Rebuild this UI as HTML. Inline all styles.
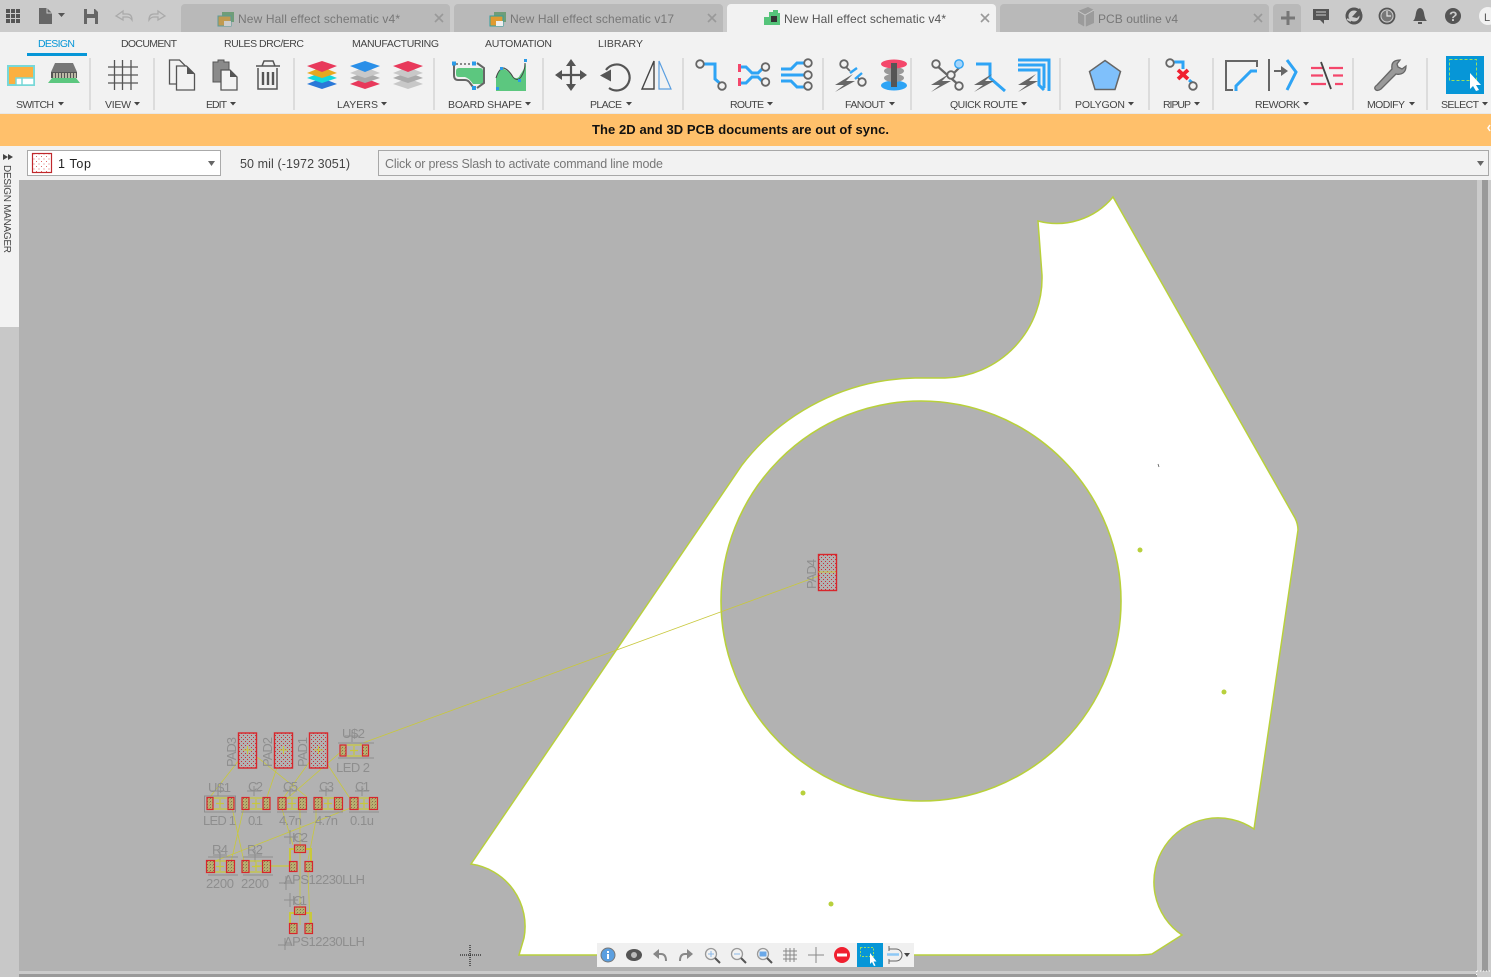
<!DOCTYPE html>
<html><head><meta charset="utf-8"><title>PCB</title>
<style>
html,body{margin:0;padding:0;background:#f2f2f2;overflow:hidden}
svg{display:block;font-family:"Liberation Sans",sans-serif}
.r{font-size:10.5px;fill:#444}
.g{font-size:10.5px;fill:#444}
.t{font-size:12px;fill:#777}
.l{font-size:13px;fill:#8e8e8e;font-weight:400}
.c{fill:none;stroke:#2ea4f5;stroke-width:3}
.o{fill:#f2f2f2;stroke:#666;stroke-width:1.8}
.d{fill:none;stroke:#666;stroke-width:2}
.x{stroke:#999;stroke-width:1.6;fill:none}
.rn{stroke:#c8c83c;stroke-width:.8;fill:none}
.s{stroke:#c8c83c;stroke-width:1.2;fill:none}
</style></head><body>
<svg xmlns="http://www.w3.org/2000/svg" width="1491" height="977" viewBox="0 0 1491 977">
<defs>
<pattern id="pd" width="4" height="4" patternUnits="userSpaceOnUse"><rect width="4" height="4" fill="#b2b2b2"/><rect x="1" y="1" width="1" height="1" fill="#c8303a"/><rect x="3" y="3" width="1" height="1" fill="#c8303a"/></pattern>
<pattern id="ps" width="3" height="3" patternUnits="userSpaceOnUse"><rect width="3" height="3" fill="#b8b070"/><rect x="0" y="0" width="1" height="1" fill="#8a6a50"/><rect x="2" y="1" width="1" height="1" fill="#a09a60"/></pattern>
<pattern id="pw" width="5" height="5" patternUnits="userSpaceOnUse"><rect width="5" height="5" fill="#fff"/><rect x="1" y="1" width="1" height="1" fill="#e06a6a"/><rect x="3.500" y="3.500" width="1" height="1" fill="#e06a6a"/></pattern>
</defs>

<!-- base -->
<rect width="1491" height="977" fill="#f2f2f2"/>
<rect y="0" width="1491" height="32" fill="#cbcbcb"/>

<!-- tabs -->
<path d="M181 32V8a4 4 0 0 1 4-4H446a4 4 0 0 1 4 4V32Z" fill="#b9b9b9"/>
<path d="M454 32V8a4 4 0 0 1 4-4H719a4 4 0 0 1 4 4V32Z" fill="#b9b9b9"/>
<path d="M727 32V8a4 4 0 0 1 4-4H992a4 4 0 0 1 4 4V32Z" fill="#f2f2f2"/>
<path d="M1000 32V8a4 4 0 0 1 4-4H1265a4 4 0 0 1 4 4V32Z" fill="#b9b9b9"/>
<path d="M1273 32V8a4 4 0 0 1 4-4H1297a4 4 0 0 1 4 4V32Z" fill="#b9b9b9"/>
<path d="M1281 18H1295M1288 11V25" stroke="#777" stroke-width="3"/>

<text x="238" y="23" class="t" textLength="162">New Hall effect schematic v4*</text>
<text x="510" y="23" class="t" textLength="164">New Hall effect schematic v17</text>
<text x="784" y="23" class="t" style="fill:#555" textLength="162">New Hall effect schematic v4*</text>
<text x="1098" y="23" class="t" textLength="80">PCB outline v4</text>
<path class="x" d="M435 14l8 8m0-8l-8 8M708 14l8 8m0-8l-8 8M981 14l8 8m0-8l-8 8M1254 14l8 8m0-8l-8 8"/>
<!-- tab icons -->
<g><rect x="222" y="12" width="12" height="10" fill="#6f9d78"/><rect x="218" y="16" width="13" height="10" fill="#c09a50" stroke="#5a9a9a"/><rect x="224" y="21" width="7" height="5" fill="#ccc"/></g>
<g><rect x="494" y="12" width="12" height="10" fill="#6f9d78"/><rect x="490" y="16" width="13" height="10" fill="#e09a30" stroke="#30a0a0"/><rect x="496" y="21" width="7" height="5" fill="#eee"/></g>
<g><path d="M764 17h5v-5h4v-2h5v3h2v12h-16z" fill="#55c47a"/><rect x="771" y="16" width="6" height="6" fill="#333"/></g>
<g><path d="M1078 11l10-4 6 3v13l-9 4-7-4z" fill="#9b9b9b"/><path d="M1078 11l7 4 9-5M1085 15v12" stroke="#c8c8c8" fill="none"/></g>

<!-- top-left icons -->
<g fill="#555"><rect x="6" y="9" width="4" height="4"/><rect x="11" y="9" width="4" height="4"/><rect x="16" y="9" width="4" height="4"/><rect x="6" y="14" width="4" height="4"/><rect x="11" y="14" width="4" height="4"/><rect x="16" y="14" width="4" height="4"/><rect x="6" y="19" width="4" height="4"/><rect x="11" y="19" width="4" height="4"/><rect x="16" y="19" width="4" height="4"/></g>
<path d="M39 8h8l5 5v11H39z" fill="#666"/><path d="M47 8v5h5" stroke="#ccc" fill="none"/><path d="M58 13h7l-3.500 4z" fill="#555"/>
<path d="M84 9h11l3 3v12H84z" fill="#666"/><rect x="87" y="9" width="7" height="5" fill="#ccc"/><rect x="87" y="18" width="8" height="6" fill="#ccc"/>
<path d="M116 16l7-5v3h4q5 0 5 6q-2-3-5-3h-4v3z" fill="#cbcbcb" stroke="#aaa" stroke-width="1.300"/>
<path d="M165 16l-7-5v3h-4q-5 0-5 6q2-3 5-3h4v3z" fill="#cbcbcb" stroke="#aaa" stroke-width="1.300"/>

<!-- top-right icons -->
<path d="M1313 9h16v11h-5v4l-4-4h-7z" fill="#555"/><path d="M1316 12h10M1316 15h10" stroke="#cbcbcb"/>
<circle cx="1354" cy="16" r="7" fill="none" stroke="#555" stroke-width="3"/><path d="M1352 17l8-9 2 5-5 5z" fill="#555"/><path d="M1347 19l4 2" stroke="#cbcbcb" stroke-width="2"/>
<circle cx="1387" cy="16" r="7.500" fill="none" stroke="#555" stroke-width="1.800"/><circle cx="1387" cy="16" r="5.500" fill="#777"/><path d="M1387 11v5h4" stroke="#e5e5e5" fill="none" stroke-width="1.200"/>
<path d="M1413 21q2-1 3-8q1-5 4-5t4 5q1 7 3 8zM1418 22h4v2h-4z" fill="#555"/>
<circle cx="1453" cy="16" r="8" fill="#555"/><text x="1449" y="21" font-size="14" font-weight="700" fill="#cbcbcb">?</text>
<circle cx="1488" cy="16" r="9" fill="#f2f2f2"/><text x="1484" y="21" font-size="11" fill="#555">L</text>

<!-- ribbon tabs -->
<text x="38" y="47" class="r" style="fill:#0696d7" textLength="37">DESIGN</text>
<text x="121" y="47" class="r" textLength="56">DOCUMENT</text>
<text x="224" y="47" class="r" textLength="80">RULES DRC/ERC</text>
<text x="352" y="47" class="r" textLength="87">MANUFACTURING</text>
<text x="485" y="47" class="r" textLength="67">AUTOMATION</text>
<text x="598" y="47" class="r" textLength="45">LIBRARY</text>
<rect x="27" y="53" width="60" height="3" fill="#0696d7"/>

<!-- separators -->
<g fill="#dcdcdc"><rect x="89" y="58" width="2" height="52"/><rect x="153" y="58" width="2" height="52"/><rect x="293" y="58" width="2" height="52"/><rect x="433" y="58" width="2" height="52"/><rect x="542" y="58" width="2" height="52"/><rect x="682" y="58" width="2" height="52"/><rect x="822" y="58" width="2" height="52"/><rect x="910" y="58" width="2" height="52"/><rect x="1059" y="58" width="2" height="52"/><rect x="1148" y="58" width="2" height="52"/><rect x="1212" y="58" width="2" height="52"/><rect x="1352" y="58" width="2" height="52"/><rect x="1426" y="58" width="2" height="52"/></g>

<!-- group labels -->
<text x="16" y="108" class="g" textLength="38">SWITCH</text><path d="M58 102h6l-3 3.500z" fill="#444"/>
<text x="105" y="108" class="g" textLength="26">VIEW</text><path d="M134 102h6l-3 3.500z" fill="#444"/>
<text x="206" y="108" class="g" textLength="21">EDIT</text><path d="M230 102h6l-3 3.500z" fill="#444"/>
<text x="337" y="108" class="g" textLength="41">LAYERS</text><path d="M381 102h6l-3 3.500z" fill="#444"/>
<text x="448" y="108" class="g" textLength="74">BOARD SHAPE</text><path d="M525 102h6l-3 3.500z" fill="#444"/>
<text x="590" y="108" class="g" textLength="32">PLACE</text><path d="M626 102h6l-3 3.500z" fill="#444"/>
<text x="730" y="108" class="g" textLength="34">ROUTE</text><path d="M767 102h6l-3 3.500z" fill="#444"/>
<text x="845" y="108" class="g" textLength="40">FANOUT</text><path d="M889 102h6l-3 3.500z" fill="#444"/>
<text x="950" y="108" class="g" textLength="68">QUICK ROUTE</text><path d="M1021 102h6l-3 3.500z" fill="#444"/>
<text x="1075" y="108" class="g" textLength="50">POLYGON</text><path d="M1128 102h6l-3 3.500z" fill="#444"/>
<text x="1163" y="108" class="g" textLength="28">RIPUP</text><path d="M1194 102h6l-3 3.500z" fill="#444"/>
<text x="1255" y="108" class="g" textLength="45">REWORK</text><path d="M1303 102h6l-3 3.500z" fill="#444"/>
<text x="1367" y="108" class="g" textLength="38">MODIFY</text><path d="M1409 102h6l-3 3.500z" fill="#444"/>
<text x="1441" y="108" class="g" textLength="38">SELECT</text><path d="M1482 102h6l-3 3.500z" fill="#444"/>

<!-- switch -->
<rect x="8" y="66" width="26" height="19" fill="#fbb040" stroke="#78d8d8" stroke-width="2"/>
<rect x="16" y="78" width="18" height="7" fill="#fff" stroke="#78d8d8" stroke-width="1.500"/><path d="M22 78v7" stroke="#78d8d8" stroke-width="1.500"/>
<path d="M52 78h24l4 5H48z" fill="#5cc77f"/><path d="M55 63h18l4 9H51z" fill="#777"/><rect x="51" y="72" width="26" height="6" fill="#555"/>
<path d="M54 73v5M57 73v5M60 73v5M63 73v5M66 73v5M69 73v5M72 73v5M75 73v5" stroke="#e8e4c8" stroke-width="1.400"/>

<!-- grid -->
<path d="M108 67h30M108 75h30M108 83h30M114.500 60v30M122.500 60v30M131 60v30" stroke="#555" stroke-width="1.300" fill="none"/>

<!-- edit -->
<path d="M169.500 60h10l6 6v18h-16z" fill="#f2f2f2" stroke="#555" stroke-width="1.300"/>
<path d="M176.500 66h10l8 8v16h-18z" fill="#f2f2f2" stroke="#555" stroke-width="1.300"/><path d="M187 66l8 8h-8z" fill="#555"/>
<path d="M213 62h5v-2h6v2h5v20h-16z" fill="#8a8a8a" stroke="#555"/>
<path d="M221 70h9l7 7v13h-16z" fill="#f2f2f2" stroke="#555" stroke-width="1.300"/><path d="M230 70l7 7h-7z" fill="#555"/>
<path d="M258 68v21h19V68M256 66h24M262 66l2-5h9l2 5" fill="none" stroke="#555" stroke-width="1.500"/><path d="M263 72v13M268 72v13M273 72v13" stroke="#555" stroke-width="2.400"/>

<!-- layers -->
<g><path d="M322 78l15 6-15 5-15-5z" fill="#2a78d8"/><path d="M322 72l15 6-15 5-15-5z" fill="#15d8dc"/><path d="M322 67l15 6-15 5-15-5z" fill="#e8a820"/><path d="M322 61l15 5-15 6-15-6z" fill="#e8395b"/></g>
<g><path d="M365 78l15 6-15 5-15-5z" fill="#e8395b"/><path d="M365 72l15 6-15 5-15-5z" fill="#aaa"/><path d="M365 67l15 6-15 5-15-5z" fill="#c8c8c8"/><path d="M365 61l15 5-15 6-15-6z" fill="#2a8fe8"/></g>
<g><path d="M408 78l15 6-15 5-15-5z" fill="#c8c8c8"/><path d="M408 72l15 6-15 5-15-5z" fill="#aaa"/><path d="M408 67l15 6-15 5-15-5z" fill="#c8c8c8"/><path d="M408 61l15 5-15 6-15-6z" fill="#e8395b"/></g>

<!-- board shape -->
<path d="M459 68h21q3 0 3 3v11q0 2-3 2h-7q-4-6-8-7h-6q-3 0-3-3v-3q0-3 3-3z" fill="#5cc77f"/>
<path d="M456 64h17" fill="none" stroke="#666" stroke-width="1.500" stroke-dasharray="2 2"/>
<path d="M454 65v10q0 5 4 5h7q3 0 5 3l3 4M477 63l7 5v15l-7 5" fill="none" stroke="#666" stroke-width="2"/>
<g fill="#2a9be8"><rect x="452" y="61.500" width="4" height="4"/><rect x="472" y="61.500" width="4" height="4"/><rect x="472" y="86" width="4" height="4"/></g>
<path d="M496 91V77q3-9 8-8 5 2 9 8 5 3 7-2 5-7 6-12v28z" fill="#5cc77f"/><path d="M496 78q3-10 8-10 5 2 9 9 4 5 8 0 4-6 4-14" fill="none" stroke="#444"/>
<g fill="#2a9be8"><rect x="500" y="67" width="3" height="3"/><rect x="518" y="79" width="3" height="3"/><rect x="524" y="59" width="3" height="3"/><rect x="496" y="87" width="3" height="3"/></g>

<!-- place -->
<path d="M571 61v28M557 75h28" stroke="#555" stroke-width="2.200"/><path d="M571 59l-5 7h10zM571 91l-5-7h10zM555 75l7-5v10zM587 75l-7-5v10z" fill="#555"/>
<path d="M606 70a13 13 0 1 1 3 18" fill="none" stroke="#555" stroke-width="2.200"/><path d="M600 75.500l11-6v12z" fill="#555"/>
<path d="M654 61v28h-12z" fill="none" stroke="#444" stroke-width="1.400"/><path d="M659 61v28h12z" fill="none" stroke="#5b9fe0" stroke-width="1.200"/>

<!-- route -->
<path class="c" d="M704 64h11v15l9 8"/><circle class="o" cx="700" cy="64" r="3.800"/><circle class="o" cx="722" cy="86" r="3.800"/>
<path class="c" d="M741 67h5l6 6h6l6-6M741 83h5l6-6h6l6 6" /><rect x="738" y="64" width="3" height="8" fill="#f4476b"/><rect x="738" y="78" width="3" height="8" fill="#f4476b"/><circle class="o" cx="765.500" cy="67" r="3.800"/><circle class="o" cx="765.500" cy="82" r="3.800"/>
<path class="c" d="M781 69h10l6-6h7M781 75h23M781 81h10l6 6h7"/><circle class="o" cx="808" cy="63" r="3.800"/><circle class="o" cx="808" cy="75" r="3.800"/><circle class="o" cx="808" cy="86" r="3.800"/>

<!-- fanout -->
<path d="M846 67l4 4M858 78l3 3" stroke="#666" stroke-width="1.800"/><path class="c" style="stroke-width:2.400" d="M850 73l7-5M855 79l7-6"/><circle class="o" cx="844" cy="64" r="3.800"/><circle class="o" cx="862" cy="82" r="3.800"/><path d="M853 74L835 85H844L835 92 855 81H846Z" fill="#666"/>
<ellipse cx="894" cy="85.500" rx="13" ry="5" fill="#2ea4f5"/><ellipse cx="894" cy="78" rx="10" ry="4" fill="#999"/><ellipse cx="894" cy="71" rx="10" ry="4" fill="#999"/><ellipse cx="894" cy="64" rx="13" ry="4.500" fill="#f4476b"/><rect x="891" y="63" width="6" height="24" fill="#555"/>

<!-- quick route -->
<path d="M936 65l25 22M962 65l-11 11" stroke="#666" stroke-width="2.200"/><circle class="o" cx="936" cy="64" r="3.800"/><circle cx="959" cy="64" r="4.200" fill="#a5d5fa" stroke="#2ea4f5" stroke-width="1.400"/><circle class="o" cx="951" cy="75" r="3.800"/><circle class="o" cx="959" cy="86" r="3.800"/><path d="M949 74L931 85H940L931 92 951 81H942Z" fill="#666"/>
<path class="c" d="M976 64h14v14l15 13"/><path d="M992 74L974 85H983L974 92 994 81H985Z" fill="#666"/>
<path class="c" d="M1018 60h31v31M1018 65h26v23M1018 70h21v15l5 5" /><path d="M1036 74L1018 85H1027L1018 92 1038 81H1029Z" fill="#666"/>

<!-- polygon -->
<path d="M1105 60.500l15.500 11-5.500 18h-20l-5.500-18z" fill="#7fc0fb" stroke="#666" stroke-width="1.500"/>

<!-- ripup -->
<path class="c" d="M1171 62h12v7M1189 80l6 5"/><circle class="o" cx="1170" cy="63" r="3.800"/><circle class="o" cx="1193" cy="86" r="3.800"/>
<path d="M1178 70l10 9m0-9l-10 9" stroke="#f02030" stroke-width="3.800"/>

<!-- rework -->
<path d="M1257 67v-6h-31v29h7" fill="none" stroke="#666" stroke-width="2"/><path class="c" d="M1236 91v-5l15-15h6"/>
<path d="M1269 59v32" stroke="#666" stroke-width="2"/><path d="M1274 71h12" stroke="#666" stroke-width="2"/><path d="M1281 66l7 5-7 5z" fill="#666"/><path class="c" d="M1287 60l9 12-9 18"/>
<path d="M1311 68h13M1329 68h14M1311 75.500h12M1333 75.500h10M1311 84h15M1335 84h8" stroke="#f4476b" stroke-width="2.200"/><path d="M1321 62l10 27" stroke="#444" stroke-width="1.800"/>

<!-- modify -->
<path transform="translate(-3,0)" d="M1380 85l15-16q-1-6 3-8 2-1 5-1l-3 4 1 3 4 2 4-3q0 5-3 7-3 2-7 1l-15 15q-4 3-6 0-1-2 2-4z" fill="#999" stroke="#666" stroke-width="1.300"/>

<!-- select -->
<rect x="1446" y="56" width="38" height="38" fill="#0696d7"/>
<rect x="1449.500" y="59.500" width="27" height="21" fill="none" stroke="#9ae05f" stroke-dasharray="3 2"/>
<path d="M1470 73v16l3-3 3 5 3-1-3-5h5z" fill="#fff"/>

<!-- banner -->
<rect y="113" width="1491" height="1" fill="#e8e8e8"/>
<rect y="114" width="1491" height="32" fill="#ffc06b"/>
<text x="592" y="134" font-size="13" font-weight="700" fill="#111" textLength="297">The 2D and 3D PCB documents are out of sync.</text>
<path d="M1490 125l-2 3 2 3" stroke="#fff" stroke-width="1.500" fill="none"/>

<!-- status row -->
<rect x="27.500" y="150.500" width="193" height="25" fill="#fff" stroke="#aaa"/>
<rect x="32.500" y="153.500" width="19" height="19" fill="url(#pw)" stroke="#c0282c" stroke-width="1.200"/>
<text x="58" y="168" font-size="12.500" fill="#222" textLength="33">1  Top</text>
<path d="M208 161h7l-3.500 5z" fill="#666"/>
<text x="240" y="168" font-size="12.500" fill="#444" textLength="110">50 mil (-1972 3051)</text>
<rect x="378.500" y="150.500" width="1110" height="25" fill="#f2f2f2" stroke="#a8a8a8"/>
<text x="385" y="168" font-size="12.500" fill="#777" textLength="278">Click or press Slash to activate command line mode</text>
<path d="M1477 161h7l-3.500 5z" fill="#666"/>

<!-- left panel -->
<path d="M3 154l5 3-5 3zM8 154l5 3-5 3z" fill="#444"/>
<text transform="translate(4,165) rotate(90)" font-size="10" fill="#444" textLength="88">DESIGN MANAGER</text>
<rect x="0" y="327" width="19" height="650" fill="#c8c8c8"/>

<!-- canvas -->
<rect x="19" y="180" width="1458" height="791" fill="#b2b2b2"/>
<rect x="1477" y="180" width="14" height="797" fill="#cbcbcb"/>
<rect x="1482" y="180" width="6" height="791" fill="#9a9a9a"/>
<rect x="19" y="971" width="1458" height="6" fill="#cbcbcb"/>
<rect x="19" y="974" width="1458" height="3" fill="#9a9a9a"/>
<path d="M1477 971h14" stroke="#fff" stroke-dasharray="1 2"/><path d="M1476.500 971v6" stroke="#fff" stroke-dasharray="1 2"/>

<!-- board -->
<path d="M1113 197L1295 518Q1298 524 1298 530L1254 829A63 63 0 1 0 1182 935L1152 954Q1146 955 1130 955H519L524 938A63 63 0 0 0 471 864L742 465A224 224 0 0 1 915 378H945A100 100 0 0 0 1042 275L1038 221A73 73 0 0 0 1113 197Z" fill="#fff" stroke="#b8d03c" stroke-width="1.500"/>
<circle cx="921" cy="601" r="200" fill="#b2b2b2" stroke="#b8d03c" stroke-width="1.600"/>
<g fill="#b8d03c"><circle cx="1140" cy="550" r="2.500"/><circle cx="1224" cy="692" r="2.500"/><circle cx="803" cy="793" r="2.500"/><circle cx="831" cy="904" r="2.500"/></g>
<path d="M1158 464l1 3" stroke="#555" stroke-width=".8"/>

<!-- ratsnest -->
<path class="rn" d="M827 573L360 744"/>
<path class="rn" d="M247 750L210 797M257 757L307 797M283 750L267 797M318 750L282 800M318 750L353 803M343 750L282 803M231 803L245 866M245 803L230 866M316 803V820L308 860M353 807L210 863M282 809L293 845M300 809V925M308 872L310 925"/>
<path class="s" d="M255 866H293"/>

<!-- pad 4 + big pads -->
<g fill="url(#pd)" stroke="#d8262c" stroke-width="1.400">
<rect x="238.500" y="733" width="18" height="35"/><rect x="274.500" y="733" width="18" height="35"/><rect x="309.500" y="733" width="18" height="35"/><rect x="818.500" y="554.500" width="18" height="36"/>
</g>
<path d="M818 572h18M243 750h9M247.500 746v8M279 750h9M283.500 746v8M314 750h9M318.500 746v8" stroke="#c8c83c"/>

<!-- component outlines -->
<g class="x" style="stroke:#8e8e8e;stroke-width:1">
<path d="M204.500 796v16h31v-16zM241 812h30M277 812h30M313 812h30M349 812h30M208 857h30M208 875h30M243 857h30M243 875h30M338 743h36M338 758h36"/>
<path d="M218 786v10M211 791h14M254 786v10M247 791h14M290 786v10M283 791h14M326 786v10M319 791h14M362 786v10M355 791h14M220 850v12M213 855h14M255 850v12M248 855h14M352 730v12M345 736h14M290 830v14M284 837h14M286 876v14M279 883h14M290 893v14M284 900h14M285 938v12M278 945h14"/>
</g>
<!-- small pad bodies -->
<g class="s" stroke="#c8c83c"><path d="M213 798h15M213 809h15M249 798h14M249 809h14M285 798h14M285 809h14M321 798h14M321 809h14M357 798h13M357 809h13M215 861h11M215 872h11M249 861h13M249 872h13M347 745h15M347 756h15"/><path d="M220 799v9M216 803.500h8M256 799v9M252 803.500h8M292 799v9M288 803.500h8M328 799v9M324 803.500h8M364 799v9M360 803.500h8M220 862v9M216 866.500h8M256 862v9M252 866.500h8M354 746v9M350 750.500h8"/><path d="M290 862v-13h21v13M290 924v-11h21v11" stroke-width="2"/></g>
<g fill="url(#ps)" stroke="#d8262c" stroke-width="1.200">
<rect x="207" y="797.500" width="6" height="12"/><rect x="228" y="797.500" width="6" height="12"/>
<rect x="242" y="797.500" width="7" height="12"/><rect x="263" y="797.500" width="7" height="12"/>
<rect x="278" y="797.500" width="8" height="12"/><rect x="298.500" y="797.500" width="8" height="12"/>
<rect x="314" y="797.500" width="8" height="12"/><rect x="334.500" y="797.500" width="8" height="12"/>
<rect x="350" y="797.500" width="8" height="12"/><rect x="369.500" y="797.500" width="8" height="12"/>
<rect x="206.500" y="860.500" width="8" height="12"/><rect x="226.500" y="860.500" width="8" height="12"/>
<rect x="242" y="860.500" width="7" height="12"/><rect x="262.500" y="860.500" width="8" height="12"/>
<rect x="294.500" y="845" width="11" height="7.500"/><rect x="289.500" y="861.500" width="7.500" height="10"/><rect x="305" y="861.500" width="7.500" height="10"/>
<rect x="294.500" y="907" width="11" height="7.500"/><rect x="289.500" y="923.500" width="7.500" height="10"/><rect x="305" y="923.500" width="7.500" height="10"/>
<rect x="340" y="745" width="6" height="11"/><rect x="362.500" y="745" width="6" height="11"/>
</g>

<!-- labels -->
<g class="l">
<text transform="translate(236,767) rotate(-90)" textLength="30">PAD3</text>
<text transform="translate(272,767) rotate(-90)" textLength="30">PAD2</text>
<text transform="translate(307,767) rotate(-90)" textLength="30">PAD1</text>
<text transform="translate(816,589) rotate(-90)" textLength="30">PAD4</text>
<text x="342" y="738" textLength="23">U$2</text>
<text x="336" y="772" textLength="34">LED 2</text>
<text x="208" y="792" textLength="23">U$1</text>
<text x="203" y="825" textLength="33">LED 1</text>
<text x="248" y="791" textLength="15">C2</text>
<text x="283" y="791" textLength="15">C5</text>
<text x="319" y="791" textLength="15">C3</text>
<text x="355" y="791" textLength="15">C1</text>
<text x="248" y="825" textLength="15">0.1</text>
<text x="279" y="825" textLength="23">4.7n</text>
<text x="315" y="825" textLength="23">4.7n</text>
<text x="350" y="825" textLength="24">0.1u</text>
<text x="212" y="854" textLength="16">R4</text>
<text x="247" y="854" textLength="16">R2</text>
<text x="206" y="888" textLength="28">2200</text>
<text x="241" y="888" textLength="28">2200</text>
<text x="292" y="842" textLength="16">IC2</text>
<text x="292" y="905" textLength="15">IC1</text>
<text x="284" y="884" textLength="81">APS12230LLH</text>
<text x="284" y="946" textLength="81">APS12230LLH</text>
</g>

<!-- crosshair -->
<path d="M470 945v21M460 955h21" stroke="#000" stroke-width="1" stroke-dasharray="1 1"/>

<!-- bottom toolbar -->
<rect x="597" y="943" width="317" height="24" fill="#f0f0f0"/>
<circle cx="608" cy="955" r="7" fill="#5b9fe0" stroke="#777"/><rect x="607" y="954" width="2" height="5" fill="#fff"/><rect x="607" y="951" width="2" height="2" fill="#fff"/>
<ellipse cx="634" cy="955" rx="8" ry="6" fill="#555"/><circle cx="634" cy="955" r="3" fill="#bbb"/>
<path d="M654 954h7q5 0 5 7" fill="none" stroke="#888" stroke-width="2"/><path d="M659 949l-6 5 6 5z" fill="#888"/>
<path d="M692 954h-7q-5 0-5 7" fill="none" stroke="#888" stroke-width="2"/><path d="M687 949l6 5-6 5z" fill="#888"/>
<circle cx="711" cy="954" r="5.500" fill="#f2f2f2" stroke="#999" stroke-width="1.300"/><path d="M715 958l5 5" stroke="#555" stroke-width="2"/><path d="M708 954h6M711 951v6" stroke="#8ab8e8"/>
<circle cx="737" cy="954" r="5.500" fill="#f2f2f2" stroke="#999" stroke-width="1.300"/><path d="M741 958l5 5" stroke="#555" stroke-width="2"/><path d="M734 954h6" stroke="#8ab8e8"/>
<circle cx="763" cy="954" r="5.500" fill="#f2f2f2" stroke="#999" stroke-width="1.300"/><path d="M767 958l5 5" stroke="#555" stroke-width="2"/><rect x="759.500" y="951.500" width="7" height="5" fill="#6aa8e8"/>
<path d="M783 951h14M783 955h14M783 959h14M786 948v14M790 948v14M794 948v14" stroke="#888"/>
<path d="M808 955h16M816 947v16" stroke="#888"/>
<circle cx="842" cy="955" r="8" fill="#f02030"/><rect x="837" y="953.500" width="10" height="3" fill="#fff"/>
<rect x="857" y="943" width="26" height="24" fill="#0696d7"/><rect x="860.500" y="947.500" width="13" height="9" fill="none" stroke="#9ae05f" stroke-dasharray="2 1.500"/><path d="M870 953v11l2-2 2 4 1.500-.5-2-4h3z" fill="#fff"/>
<path d="M889 949h7a6 6 0 0 1 0 12h-7M889 946v5M889 959v5" fill="none" stroke="#666"/><path d="M887 954.500h12" stroke="#8ec8f5" stroke-width="2.500"/><path d="M904 953h6l-3 4z" fill="#444"/>
</svg>
</body></html>
